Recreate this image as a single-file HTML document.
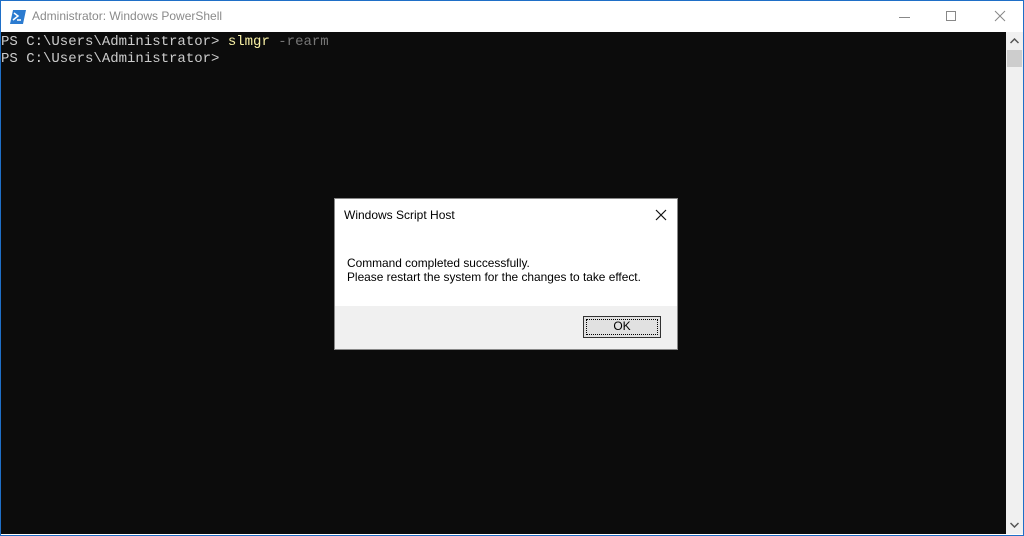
<!DOCTYPE html>
<html><head><style>
*{margin:0;padding:0;box-sizing:border-box}
body{width:1024px;height:536px;background:#fff;position:relative;overflow:hidden;font-family:"Liberation Sans",sans-serif}
.frame{position:absolute;left:0;top:0;width:1024px;height:536px;border:1px solid #1f6fc7}
.title{position:absolute;left:1px;top:1px;width:1022px;height:31px;background:#fff}
.title span{position:absolute;left:31px;top:8px;font-size:12px;color:#8a8a8a}
.con{position:absolute;left:1px;top:32px;width:1005px;height:502px;background:#0c0c0c;font-family:"Liberation Mono",monospace;font-size:14px;line-height:17px;color:#cccccc;padding-top:2px}
.sb{position:absolute;left:1006px;top:32px;width:17px;height:502px;background:#f0f0f0}
.thumb{position:absolute;left:1007px;top:50px;width:15px;height:17px;background:#cdcdcd}
.dlg{position:absolute;left:334px;top:198px;width:344px;height:152px;background:#fff;border:1px solid #888}
.dlg .t{position:absolute;left:9px;top:9px;font-size:12px;color:#000}
.dlg .m{position:absolute;left:12px;top:57px;font-size:11.9px;line-height:14px;color:#000}
.dlg .f{position:absolute;left:0;top:107px;width:342px;height:43px;background:#f0f0f0}
.ok{position:absolute;left:248px;top:10px;width:78px;height:22px;border:1px solid #333;background:#e1e1e1;font-size:12px;text-align:center;line-height:18px}
.ok i{position:absolute;left:2px;top:2px;right:2px;bottom:2px;border:1px dotted #000}
</style></head><body>
<div class="frame"></div>
<div class="title">
<svg style="position:absolute;left:9px;top:9px" width="16" height="14" viewBox="0 0 16 14"><path d="M3 0H16L13 14H0Z" fill="#2b7bd0"/><path d="M4 3L8 6L3 10" stroke="#fff" stroke-width="1.5" fill="none"/><path d="M7 10H11" stroke="#fff" stroke-width="1.5"/></svg>
<span>Administrator: Windows PowerShell</span>
<svg style="position:absolute;left:898px;top:10px" width="12" height="12"><path d="M0 6.5H11" stroke="#888"/></svg>
<svg style="position:absolute;left:944px;top:9px" width="12" height="12"><rect x="1.5" y="1.5" width="9" height="9" fill="none" stroke="#888"/></svg>
<svg style="position:absolute;left:993px;top:9px" width="12" height="12"><path d="M1 1L11 11M11 1L1 11" stroke="#888"/></svg>
</div>
<div class="con">PS C:\Users\Administrator&gt; <span style="color:#f9f1a5">slmgr</span> <span style="color:#767676">-rearm</span><br>PS C:\Users\Administrator&gt;</div>
<div class="sb"><svg style="position:absolute;left:4px;top:6px" width="9" height="6"><path d="M0.5 5L4.5 1L8.5 5" stroke="#555" stroke-width="1.5" fill="none"/></svg>
<svg style="position:absolute;left:4px;top:490px" width="9" height="6"><path d="M0.5 1L4.5 5L8.5 1" stroke="#555" stroke-width="1.5" fill="none"/></svg></div>
<div class="thumb"></div>
<div class="dlg">
<div class="t">Windows Script Host</div>
<svg style="position:absolute;left:320px;top:10px" width="12" height="12"><path d="M1 1L11 11M11 1L1 11" stroke="#111" stroke-width="1.2"/></svg>
<div class="m">Command completed successfully.<br>Please restart the system for the changes to take effect.</div>
<div class="f"><div class="ok"><i></i>OK</div></div>
</div>
</body></html>
